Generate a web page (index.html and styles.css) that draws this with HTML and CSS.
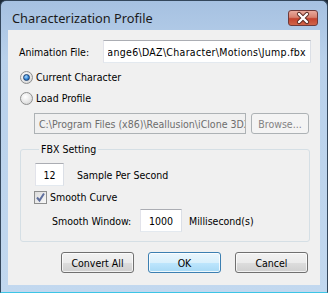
FILE: index.html
```html
<!DOCTYPE html>
<html>
<head>
<meta charset="utf-8">
<link rel="stylesheet" href="styles.css">
</head>
<body>
<div class="window">
  <div class="titlebar">
    <span class="title">Characterization Profile</span>
    <span class="close">
      <svg width="30" height="16" viewBox="0 0 30 16">
        <path d="M11 4 L19 12 M19 4 L11 12" stroke="#5a2a22" stroke-width="4.2" stroke-linecap="round"/>
        <path d="M11 4 L19 12 M19 4 L11 12" stroke="#ffffff" stroke-width="2.4" stroke-linecap="round"/>
      </svg>
    </span>
  </div>
  <div class="client">
    <div class="file-row">
      <span class="label">Animation File:</span>
      <div class="field file"><div class="clip"><span>C:\Program Files (x86)\Reallusion\iClone 3DXchange6\DAZ\Character\Motions\Jump.fbx</span></div></div>
    </div>
    <div class="option first"><span class="radio checked"></span><span>Current Character</span></div>
    <div class="option second"><span class="radio"></span><span>Load Profile</span></div>
    <div class="path-row">
      <div class="field path">C:\Program Files (x86)\Reallusion\iClone 3DXchange6\Profile</div>
      <span class="btn disabled browse">Browse...</span>
    </div>
    <fieldset class="group">
      <legend>FBX Setting</legend>
      <div class="rate-row">
        <div class="field small">12</div>
        <span class="label">Sample Per Second</span>
      </div>
      <div class="check-row">
        <span class="checkbox">
          <svg width="13" height="13" viewBox="0 0 13 13">
            <path d="M3 6.5 L5.5 9.5 L10 2.5" fill="none" stroke="#5f6f9e" stroke-width="2"/>
          </svg>
        </span>
        <span>Smooth Curve</span>
      </div>
      <div class="window-row">
        <span class="label">Smooth Window:</span>
        <div class="field medium">1000</div>
        <span class="label">Millisecond(s)</span>
      </div>
    </fieldset>
    <div class="buttons">
      <span class="btn">Convert All</span>
      <span class="btn default">OK</span>
      <span class="btn">Cancel</span>
    </div>
  </div>
</div>
</body>
</html>
```
FILE: styles.css
```css
html, body {
  margin: 0;
  padding: 0;
  background: #1d2a38;
}
.window {
  width: 328px;
  height: 293px;
  box-sizing: border-box;
  border: 1px solid #34475c;
  border-bottom-color: #3cc5e6;
  border-radius: 6px 6px 0 0;
  background: linear-gradient(180deg, #a6c1e1 0%, #b9d1eb 20%, #c2d8ef 100%);
  display: flex;
  flex-direction: column;
  font-family: "DejaVu Sans Condensed", "DejaVu Sans", sans-serif;
  font-stretch: condensed;
  font-size: 10.5px;
  color: #000;
}
.titlebar {
  height: 29px;
  display: flex;
  align-items: flex-start;
}
.title {
  margin-left: 11px;
  margin-top: 9px;
  font-size: 12.8px;
  line-height: 17px;
  color: #1b1b1b;
  font-family: "Noto Sans", sans-serif;
  font-stretch: normal;
}
.close {
  margin-left: auto;
  margin-right: 9px;
  margin-top: 9px;
  width: 30px;
  height: 16px;
  box-sizing: border-box;
  border: 1px solid #6f3a3a;
  border-radius: 3px;
  background: linear-gradient(180deg, #e9a99c 0%, #d7816f 45%, #c4432e 55%, #d0654a 100%);
  display: flex;
  overflow: hidden;
}
.close svg {
  margin: -1px;
}
.client {
  margin: 0 7px;
  height: 255px;
  background: #f0f0f0;
  padding: 10px 0 0 0;
  box-sizing: border-box;
}
.file-row {
  display: flex;
  align-items: center;
  height: 23px;
}
.file-row .label {
  margin-left: 11px;
  width: 84px;
  flex: none;
}
.field {
  box-sizing: border-box;
  border: 1px solid;
  border-color: #abadb3 #dbdfe6 #e3e9ef #e2e3ea;
  background: #fff;
  white-space: nowrap;
  overflow: hidden;
  display: flex;
  align-items: center;
}
.field.file {
  width: 208px;
  height: 23px;
  padding: 0 4px 0 4px;
}
.field.file .clip {
  flex: 1;
  min-width: 0;
  overflow: hidden;
  display: flex;
  justify-content: flex-end;
  letter-spacing: 0.3px;
}
.option {
  display: flex;
  align-items: center;
  height: 16px;
  margin-left: 12px;
}
.option.first { margin-top: 6px; }
.option.second { margin-top: 5px; }
.radio {
  width: 11px;
  height: 11px;
  border-radius: 50%;
  border: 1px solid #8e8f8f;
  background: radial-gradient(circle at 40% 35%, #ffffff 0%, #e6e6e6 55%, #c9c9c9 100%);
  margin-right: 3px;
  position: relative;
  flex: none;
}
.radio.checked::after {
  content: "";
  position: absolute;
  left: 2px;
  top: 2px;
  width: 5px;
  height: 5px;
  border-radius: 50%;
  border: 1px solid #1c3f6e;
  background: radial-gradient(circle at 40% 35%, #a8d8ff 0%, #2a7fd2 60%, #154c93 100%);
}
.path-row {
  display: flex;
  margin-top: 7px;
  margin-left: 26px;
  height: 21px;
}
.field.path {
  width: 212px;
  height: 21px;
  background: #f0f0f0;
  border-color: #adb2b5;
  color: #6d6d6d;
  padding-left: 4px;
}
.btn {
  box-sizing: border-box;
  width: 73px;
  height: 21px;
  border: 1px solid #707070;
  border-radius: 3px;
  background: linear-gradient(180deg, #f2f2f2 0%, #ebebeb 50%, #dddddd 51%, #cfcfcf 100%);
  display: flex;
  align-items: center;
  justify-content: center;
  box-shadow: inset 0 0 0 1px rgba(255,255,255,0.7);
}
.btn.browse {
  width: 58px;
  margin-left: 5px;
}
.btn.disabled {
  border-color: #adb2b5;
  background: #f4f4f4;
  color: #838383;
  box-shadow: none;
}
.btn.default {
  border-color: #3c7fb1;
  background: linear-gradient(180deg, #eaf6fd 0%, #d9f0fc 50%, #bee6fd 51%, #a7d9f5 100%);
  box-shadow: inset 0 0 0 1px rgba(255,255,255,0.8);
}
.group {
  margin: 8px 0 0 12px;
  width: 290px;
  box-sizing: border-box;
  border: 1px solid #d5dfe5;
  border-radius: 3px;
  padding: 7px 0 9px 14px;
  min-width: 0;
}
.group legend {
  padding: 0 2px;
  margin-left: 4px;
  line-height: 14px;
}
.rate-row {
  display: flex;
  align-items: center;
  height: 23px;
}
.field.small {
  width: 29px;
  height: 23px;
  justify-content: center;
}
.rate-row .label {
  margin-left: 13px;
}
.check-row {
  display: flex;
  align-items: center;
  height: 16px;
  margin-top: 3px;
  margin-left: -1px;
}
.checkbox {
  width: 13px;
  height: 13px;
  box-sizing: border-box;
  border: 1px solid #8e8f8f;
  background: linear-gradient(135deg, #dcdcdc, #f8f8f8);
  margin-right: 3px;
  display: flex;
  overflow: hidden;
}
.checkbox svg { margin: -1px; }
.window-row {
  display: flex;
  align-items: center;
  height: 23px;
  margin-top: 4px;
  margin-left: 17px;
}
.window-row .label:first-child {
  width: 88px;
}
.field.medium {
  width: 42px;
  height: 23px;
  justify-content: center;
}
.window-row .label:last-child {
  margin-left: 7px;
}
.buttons {
  display: flex;
  justify-content: flex-end;
  gap: 14px;
  margin: 10px 12px 0 0;
}
```
